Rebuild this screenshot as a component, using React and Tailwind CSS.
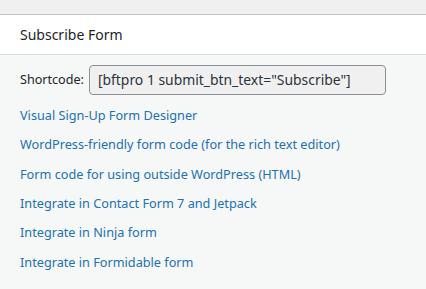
export default function App() {
  const links = [
    "Visual Sign-Up Form Designer",
    "WordPress-friendly form code (for the rich text editor)",
    "Form code for using outside WordPress (HTML)",
    "Integrate in Contact Form 7 and Jetpack",
    "Integrate in Ninja form",
    "Integrate in Formidable form",
  ];

  return (
    <div className="w-[426px] h-[289px] bg-[#f6f7f7] overflow-hidden font-['Noto_Sans',sans-serif] text-[#1d2327]">
      {/* top strip */}
      <div className="h-[15px] bg-[#f0f0f1] border-b border-[#c3c4c7]" />

      {/* header */}
      <div className="h-[40px] bg-white border-b border-[#dcdcde] flex items-center px-5 text-[14px]">
        Subscribe Form
      </div>

      {/* body */}
      <div className="px-5 pt-[10px]">
        <div className="flex items-center gap-[5px] text-[12.6px]">
          <span>Shortcode:</span>
          <div className="w-[297px] h-[30px] flex items-center px-[8px] bg-[#f0f0f1] border border-[#8c8f94] rounded-[4px] text-[13.9px] text-[#2c3338]">
            [bftpro 1 submit_btn_text="Subscribe"]
          </div>
        </div>

        <ul className="mt-[6px] flex flex-col">
          {links.map((l) => (
            <li key={l} className="h-[29.3px] flex items-center text-[12.7px] text-[#2271b1]">
              <a href="#">{l}</a>
            </li>
          ))}
        </ul>
      </div>
    </div>
  );
}
